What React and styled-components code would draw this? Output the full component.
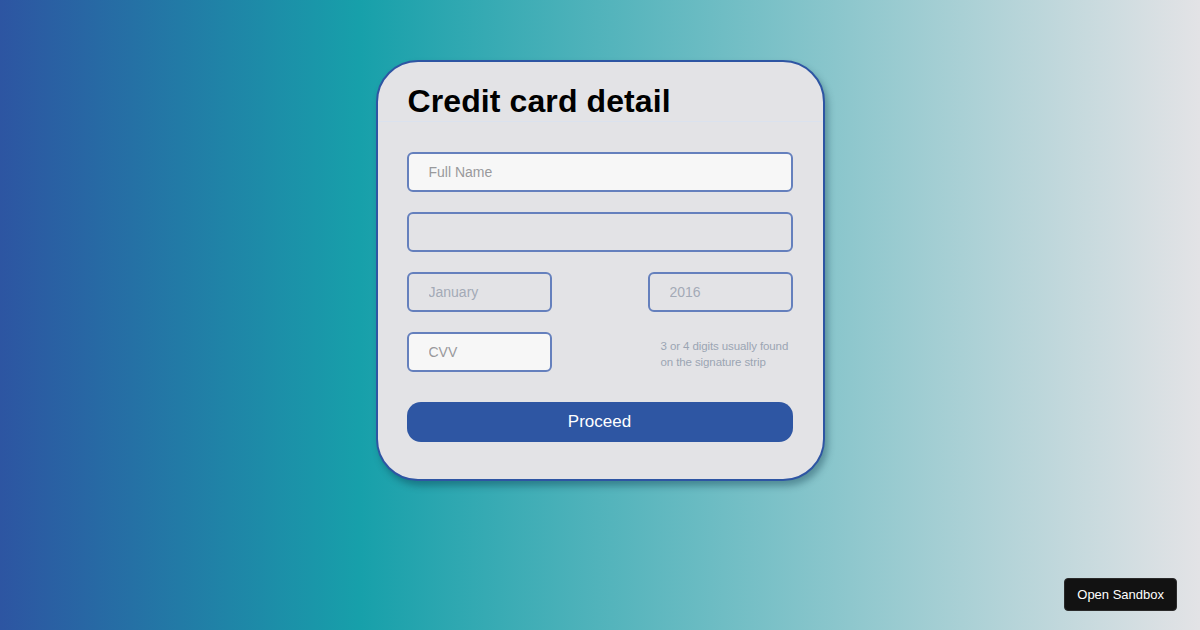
import React from "react";
import styled, { createGlobalStyle } from "styled-components";

const Global = createGlobalStyle`
  html, body { margin: 0; padding: 0; }
  body {
    width: 1200px;
    height: 630px;
    overflow: hidden;
    font-family: "Liberation Sans", Arial, sans-serif;
    background: linear-gradient(to right, #2d55a2 0%, #17a0aa 30%, #e3e3e6 100%);
  }
  * { box-sizing: border-box; }
`;

const Page = styled.div`
  width: 1200px;
  height: 630px;
  display: flex;
  flex-direction: column;
  align-items: center;
  padding-top: 60px;
`;

const Card = styled.form`
  width: 449px;
  background: #e3e3e6;
  border: 2px solid #2e55a3;
  border-radius: 42px;
  box-shadow: 3px 5px 7px rgba(0, 40, 60, 0.35);
  display: flex;
  flex-direction: column;
`;

const Header = styled.div`
  height: 60px;
  padding: 21px 0 0 30px;
  border-bottom: 1px solid #dbe2ee;
`;

const Title = styled.h1`
  margin: 0;
  font-size: 32px;
  line-height: 36px;
  font-weight: bold;
  color: #000;
  letter-spacing: 0.1px;
`;

const Body = styled.div`
  padding: 30px 30px 37px 29px;
  display: flex;
  flex-direction: column;
  gap: 20px;
`;

const Row = styled.div`
  display: flex;
  justify-content: space-between;
  align-items: center;
`;

const Input = styled.input`
  width: ${(p) => (p.$half ? "145px" : "100%")};
  height: 40px;
  border: 2px solid #6580bd;
  border-radius: 6px;
  background: ${(p) => (p.$filled ? "#f7f7f7" : "transparent")};
  padding: 0 0 0 20px;
  font-family: "Liberation Sans", Arial, sans-serif;
  font-size: 14px;
  outline: none;
  &::placeholder {
    color: ${(p) => (p.$muted ? "#a3aab6" : "#99999c")};
  }
`;

const Hint = styled.p`
  margin: 3px 0 0;
  width: 132px;
  font-size: 11.5px;
  line-height: 16px;
  letter-spacing: -0.1px;
  color: #9ba5b3;
  white-space: nowrap;
`;

const Button = styled.button`
  margin-top: 10px;
  width: 100%;
  height: 40px;
  border: none;
  border-radius: 14px;
  background: #2e56a3;
  color: #fff;
  font-family: "Liberation Sans", Arial, sans-serif;
  font-size: 17px;
`;

const SandboxButton = styled.button`
  position: fixed;
  right: 23px;
  bottom: 19px;
  height: 33px;
  padding: 0 12px;
  background: #121212;
  color: #fff;
  border: 1px solid #2a2a2a;
  border-radius: 4px;
  font-family: "Liberation Sans", Arial, sans-serif;
  font-size: 13px;
`;

export default function App() {
  return (
    <>
      <Global />
      <Page>
        <Card onSubmit={(e) => e.preventDefault()}>
          <Header>
            <Title>Credit card detail</Title>
          </Header>
          <Body>
            <Input $filled placeholder="Full Name" />
            <Input />
            <Row>
              <Input $half $muted placeholder="January" />
              <Input $half $muted placeholder="2016" />
            </Row>
            <Row>
              <Input $half $filled placeholder="CVV" />
              <Hint>
                3 or 4 digits usually found
                <br />
                on the signature strip
              </Hint>
            </Row>
            <Button type="submit">Proceed</Button>
          </Body>
        </Card>
      </Page>
      <SandboxButton>Open Sandbox</SandboxButton>
    </>
  );
}
